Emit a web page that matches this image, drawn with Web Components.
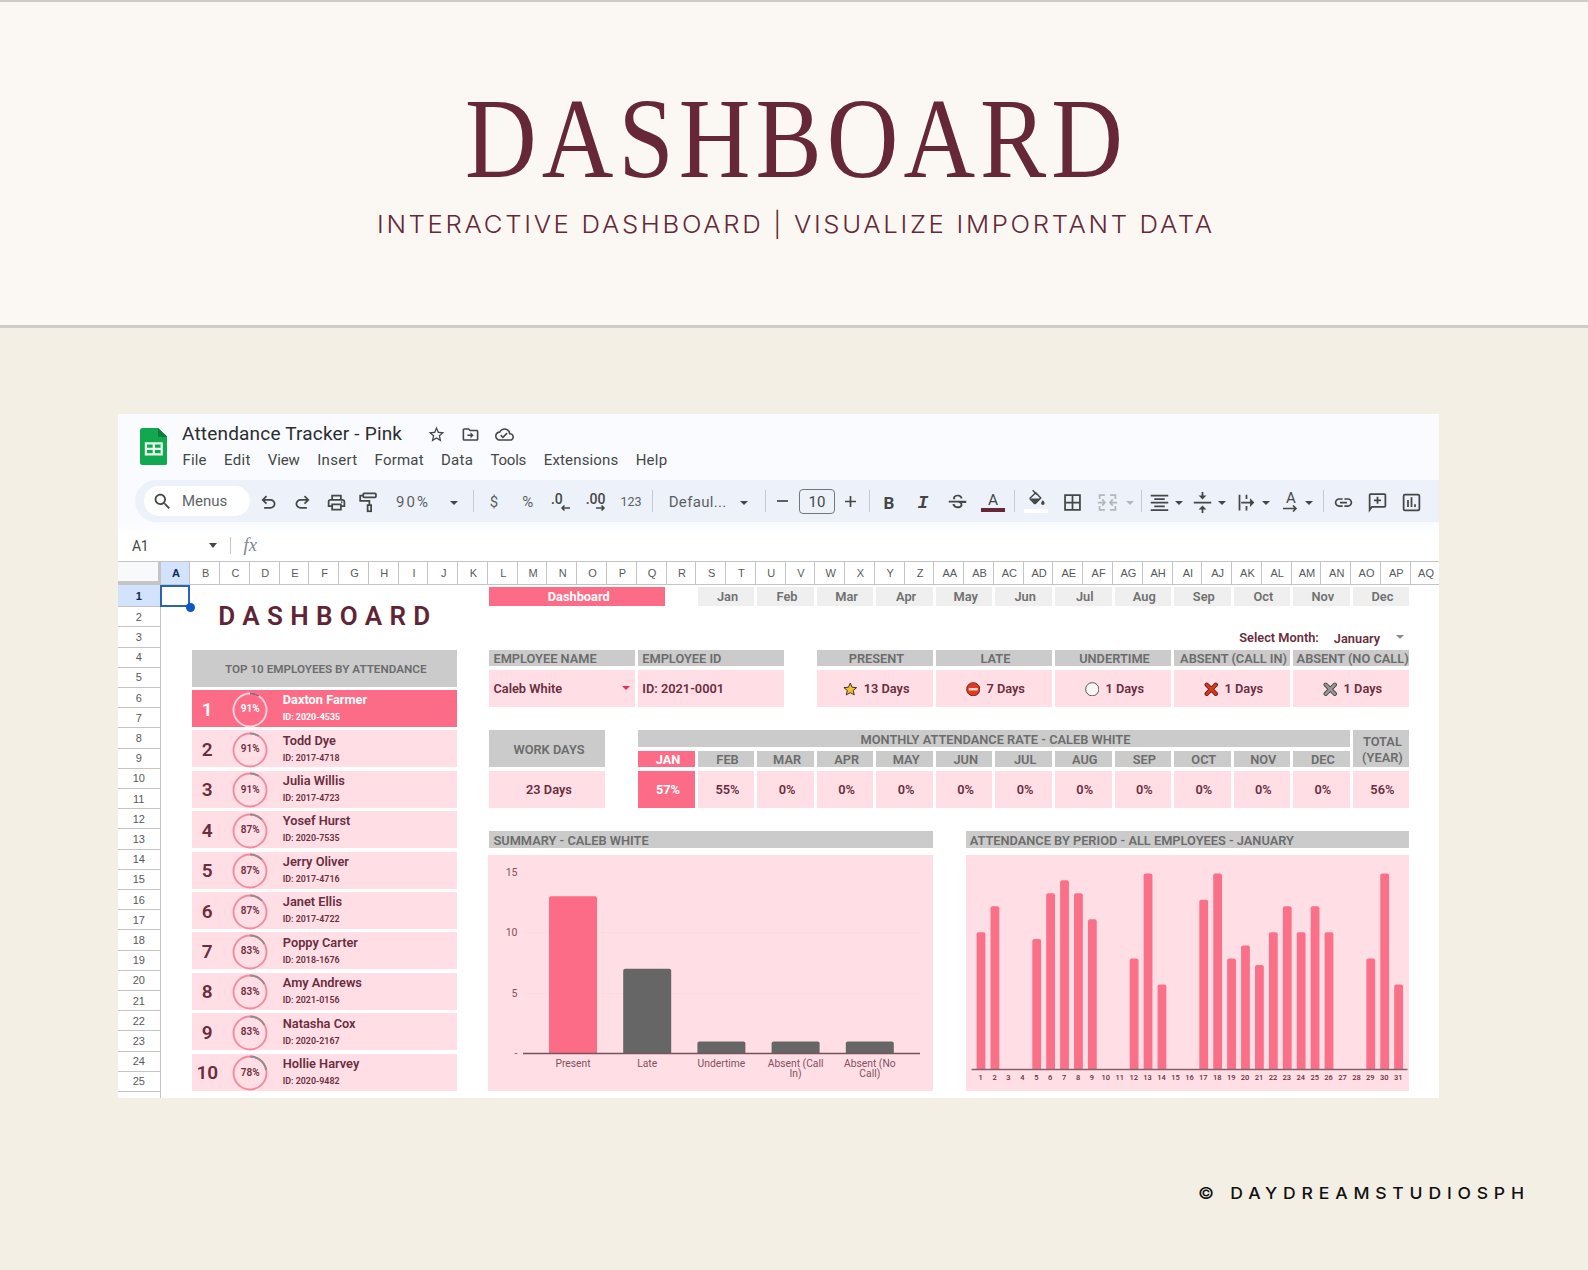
<!DOCTYPE html>
<html lang="en">
<head>
<meta charset="utf-8">
<title>Attendance Tracker - Pink</title>
<style>
html, body {
	margin: 0;
	height: 100%;
	overflow: hidden;
}
</style>
</head>
<body>
<promo-page>
	<promo-header slot="header">
		<fit-text slot="title" width="658" stretch="0.87">DASHBOARD</fit-text>
		<fit-text slot="subtitle" width="835" stretch="1.05">INTERACTIVE DASHBOARD | VISUALIZE IMPORTANT DATA</fit-text>
	</promo-header>
	<app-window>
		<doc-bar></doc-bar>
		<tool-bar></tool-bar>
		<formula-bar cell="A1"></formula-bar>
		<sheet-grid></sheet-grid>
	</app-window>
	<fit-text slot="footer" width="326" stretch="1.07">© DAYDREAMSTUDIOSPH</fit-text>
</promo-page>

<script>
const GREY = '#444746';

// 24 unit icons, filled unless they set their own stroke
const ICONS = {
	star: '<path d="M22 9.24l-7.19-.62L12 2 9.19 8.63 2 9.24l5.46 4.73L5.82 21 12 17.27 18.18 21l-1.63-7.03L22 9.24zM12 15.4l-3.76 2.27 1-4.28-3.32-2.88 4.38-.38L12 6.1l1.71 4.04 4.38.38-3.32 2.88 1 4.28L12 15.4z"/>',
	move: '<path d="M20 6h-8l-2-2H4c-1.1 0-2 .9-2 2v12c0 1.1.9 2 2 2h16c1.1 0 2-.9 2-2V8c0-1.1-.9-2-2-2zm0 12H4V6h5.17l2 2H20v10zM8 12h4V9l4 4-4 4v-3H8z"/>',
	cloud: '<path d="M19.35 10.04C18.67 6.59 15.64 4 12 4 9.11 4 6.6 5.64 5.35 8.04 2.34 8.36 0 10.91 0 14c0 3.31 2.69 6 6 6h13c2.76 0 5-2.24 5-5 0-2.64-2.05-4.78-4.65-4.96zM19 18H6c-2.21 0-4-1.79-4-4 0-2.05 1.53-3.76 3.56-3.97l1.07-.11.5-.95C8.08 7.14 9.94 6 12 6c2.62 0 4.88 1.86 5.39 4.43l.3 1.5 1.53.11c1.56.1 2.78 1.41 2.78 2.96 0 1.65-1.35 3-3 3zm-9-3.82l-2.09-2.09L6.5 13.5 10 17l6.01-6.01-1.41-1.41z"/>',
	search: '<path d="M15.5 14h-.79l-.28-.27C15.41 12.59 16 11.11 16 9.5 16 5.91 13.09 3 9.5 3S3 5.91 3 9.5 5.91 16 9.5 16c1.61 0 3.09-.59 4.23-1.57l.27.28v.79l5 4.99L20.49 19l-4.99-5zm-6 0C7.01 14 5 11.99 5 9.5S7.01 5 9.5 5 14 7.01 14 9.5 11.99 14 9.5 14z"/>',
	undo: '<path d="M7 19v-2h7.1q1.58 0 2.74-1T18 13.5q0-1.5-1.16-2.5T14.1 10H7.8l2.6 2.6L9 14 4 9l5-5 1.4 1.4L7.8 8h6.3q2.43 0 4.16 1.58T20 13.5q0 2.35-1.74 3.93T14.1 19z"/>',
	redo: '<path transform="matrix(-1 0 0 1 24 0)" d="M7 19v-2h7.1q1.58 0 2.74-1T18 13.5q0-1.5-1.16-2.5T14.1 10H7.8l2.6 2.6L9 14 4 9l5-5 1.4 1.4L7.8 8h6.3q2.43 0 4.16 1.58T20 13.5q0 2.35-1.74 3.93T14.1 19z"/>',
	print: '<path d="M19 8h-1V3H6v5H5c-1.66 0-3 1.34-3 3v6h4v4h12v-4h4v-6c0-1.66-1.34-3-3-3zM8 5h8v3H8V5zm8 12v2H8v-4h8v2zm2-2v-2H6v2H4v-4c0-.55.45-1 1-1h14c.55 0 1 .45 1 1v4h-2z"/><circle cx="18" cy="11.5" r="1"/>',
	paint: '<g fill="none" stroke="currentColor" stroke-width="2"><rect x="6" y="1.5" width="14.5" height="4.5" rx="1"/><path d="M6 4H2.5v6H13v5"/><rect x="11" y="15" width="4" height="7"/></g>',
	strike: '<path d="M6.85 7.08C6.85 4.37 9.45 3 12.24 3c1.64 0 3 .49 3.9 1.28.77.65 1.46 1.73 1.46 3.24h-2.1c0-.31-.05-.59-.15-.85-.29-.86-1.9-1.78-3.15-1.78-2.1 0-3.2 1.2-3.2 2.2 0 .48.25.88.74 1.21H7.39c-.21-.34-.54-.59-.54-1.22zM22 12v-2H2v2h10.62c1.15.45 2.96.75 2.96 2.2 0 1.3-1.5 2.2-3.28 2.2-1.54 0-3.63-.84-3.63-2.8H6.4c0 .55.08 1.13.24 1.58.81 2.29 3.29 3.3 5.67 3.3 2.27 0 5.3-.89 5.3-4.05 0-.3-.01-1.16-.48-1.94H22z"/>',
	fill: '<path d="M3 10L11 2.5l7 7.5-7.5 7.5q-.7.6-1.4 0L3.2 11.5z" fill="none" stroke="currentColor" stroke-width="2"/><path d="M3 10.5h15l-8 7.5z"/><path d="M6.5-1l6 6" stroke="currentColor" stroke-width="2"/><path d="M21 13s2.5 2.7 2.5 4.2a2.5 2.5 0 0 1-5 0C18.5 15.7 21 13 21 13z"/>',
	borders: '<path d="M3.5 3.5h17v17h-17zM12 3.5v17M3.5 12h17" fill="none" stroke="currentColor" stroke-width="2"/>',
	merge: '<path d="M9 3.5H3V8m0 8v4.5h6M15 3.5h6V8m0 8v4.5h-6M1 12h7m15 0h-7M6 8.5L9 12l-3 3.5m12-7L15 12l3 3.5" fill="none" stroke="currentColor" stroke-width="2"/>',
	align: '<path d="M2 3h20v2H2zm4 4.2h12v2H6zm-4 4h20v2H2zm4 4.2h12v2H6zm-4 4.3h20v2H2z"/>',
	valign: '<path d="M2 11h20v2H2zM11 0h2v4h3.5L12 8.5 7.5 4H11zM11 24h2v-4h3.500L12 15.500 7.500 20H11z"/>',
	wrap: '<path d="M3 3h2v18H3zm8 0h2v5h-2zm0 13h2v5h-2zM6 11h10V7l5 5-5 5v-4H6z"/>',
	link: '<path d="M3.9 12c0-1.71 1.39-3.1 3.1-3.1h4V7H7c-2.76 0-5 2.24-5 5s2.24 5 5 5h4v-1.9H7c-1.71 0-3.1-1.39-3.1-3.1zM8 13h8v-2H8v2zm9-6h-4v1.9h4c1.71 0 3.1 1.39 3.1 3.1s-1.39 3.1-3.1 3.1h-4V17h4c2.76 0 5-2.24 5-5s-2.24-5-5-5z"/>',
	comment: '<path d="M3 20.5v-17q0-1 1-1h16q1 0 1 1V16q0 1-1 1H5.500zM12 5.500v8M8 9.500h8" fill="none" stroke="currentColor" stroke-width="2"/>',
	chart: '<rect x="3" y="3" width="18" height="18" rx="1.5" fill="none" stroke="currentColor" stroke-width="2"/><path d="M7 9h2v8H7zm4-3h2v11h-2zm4 8h2v3h-2z"/>'
};

// cell marks, 16 unit box
const MARKS = {
	star: '<path d="M8 1.2l2 4.600 5 .4-3.800 3.200 1.200 4.900L8 11.700l-4.400 2.600 1.200-4.900L1 6.200l5-.4z" fill="#f5c12e" stroke="#3e3428" stroke-width="1.100"/>',
	stop: '<circle cx="8" cy="8" r="7.3" fill="#df3a20" stroke="#6b2018" stroke-width="1"/><rect x="3" y="6.7" width="10" height="2.6" fill="#f9d9cf"/>',
	circle: '<circle cx="8" cy="8" r="7.3" fill="#f6f6f6" stroke="#4a4a4a" stroke-width="1"/>',
	cross: '<path d="M3 3l10 10M13 3L3 13" stroke="#5b1a14" stroke-width="4.8" stroke-linecap="round"/><path d="M3 3l10 10M13 3L3 13" stroke="#d9381e" stroke-width="3" stroke-linecap="round"/>',
	ghost: '<path d="M3 3l10 10M13 3L3 13" stroke="#454545" stroke-width="4.8" stroke-linecap="round"/><path d="M3 3l10 10M13 3L3 13" stroke="#999" stroke-width="2.8" stroke-linecap="round"/>'
};

class Base extends HTMLElement {
	constructor() {
		super();
		this.attachShadow({mode: 'open'});
	}

	connectedCallback() {
		this.shadowRoot.innerHTML = this.render();
	}
}

class PromoPage extends Base {
	render() {
		return `
		<style>
		:host {
			display: flex;
			flex-direction: column;
			box-sizing: border-box;
			width: 1588px;
			height: 1270px;
			background: #f4efe4;
		}

		main {
			margin: 86px 0 0 118px;
		}

		footer {
			margin: 83px 64px 0 0;
			text-align: right;
			font: 500 16.4px/24px Inter, sans-serif;
			color: #111;
		}
		</style>
		<slot name="header"></slot>
		<main><slot></slot></main>
		<footer><slot name="footer"></slot></footer>`;
	}
}

class PromoHeader extends Base {
	render() {
		return `
		<style>
		:host {
			display: flex;
			flex-direction: column;
			align-items: center;
			box-sizing: border-box;
			height: 328px;
			background: #fbf8f4;
			border-top: 2px solid #cfccc7;
			border-bottom: 3px solid #cfccc7;
			color: #662838;
		}

		h1 {
			margin: 74px 0 0;
			font: 400 114px/126px "Liberation Serif", serif;
		}

		p {
			margin: 8px 0 0;
			font: 300 24.5px/28px Inter, sans-serif;
		}
		</style>
		<h1><slot name="title"></slot></h1>
		<p><slot name="subtitle"></slot></p>`;
	}
}

// tracks its text out (or in) to an exact width; stretch makes the letters wider or narrower
class FitText extends Base {
	render() {
		return `
		<style>
		:host {
			display: inline-block;
			white-space: nowrap;
		}

		span {
			display: inline-block;
			transform-origin: 0 0;
		}
		</style>
		<span><slot></slot></span>`;
	}

	connectedCallback() {
		super.connectedCallback();
		const span = this.shadowRoot.querySelector('span');
		const width = this.getAttribute('width');
		const stretch = this.getAttribute('stretch') || 1;
		const count = this.textContent.trim().length - 1;
		const gap = (width / stretch - span.getBoundingClientRect().width) / count;
		span.style.letterSpacing = gap + 'px';
		span.style.marginRight = -gap + 'px';
		if (stretch != 1) {
			span.style.transform = `scaleX(${stretch})`;
			this.style.width = width + 'px';
			this.style.textAlign = 'left';
		}
	}
}

class AppWindow extends Base {
	render() {
		return `
		<style>
		:host {
			display: flex;
			flex-direction: column;
			width: 1321px;
			height: 684px;
			overflow: hidden;
			background: linear-gradient(#f9fbfe 108px, #fff 122px);
			font-family: Roboto, sans-serif;
			color: ${GREY};
		}

		::slotted(*) {
			flex: none;
		}
		</style>
		<slot></slot>`;
	}
}

class UiIcon extends Base {
	render() {
		return `
		<style>
		:host {
			display: inline-flex;
			align-items: center;
			justify-content: center;
			width: 20px;
			height: 22px;
		}

		svg {
			flex: none;
			width: var(--size, 21px);
			height: var(--size, 21px);
			fill: currentColor;
			overflow: visible;
		}
		</style>
		<svg viewBox="0 0 24 24">${ICONS[this.getAttribute('name')]}</svg>`;
	}
}

class DocBar extends Base {
	render() {
		const menus = ['File', 'Edit', 'View', 'Insert', 'Format', 'Data', 'Tools', 'Extensions', 'Help'];
		const widths = [24, 26.5, 32, 40, 49, 32, 36, 74.5, 31.5];
		return `
		<style>
		:host {
			display: flex;
			height: 66px;
			box-sizing: border-box;
			padding: 8px 0 0 21.5px;
			gap: 15px;
		}

		.logo {
			width: 27.5px;
			height: 37px;
			margin-top: 5.5px;
		}

		.name {
			display: flex;
			align-items: center;
			height: 24px;
			font-size: 19px;
			line-height: 24px;
			color: #2b2d30;
			--size: 19px;
		}

		.name ui-icon {
			margin: 1px 0 0 14.3px;
			color: ${GREY};
		}

		.name ui-icon:first-of-type {
			margin-left: 24px;
		}

		nav {
			display: flex;
			gap: 17.4px;
			margin-top: 4px;
			margin-left: .5px;
			font-size: 15px;
			line-height: 20px;
		}
		</style>
		<svg class="logo" viewBox="0 0 27.5 37">
			<path d="M2.5 0H18l9.500 9v25.500q0 2.500-2.500 2.500H2.500Q0 37 0 34.500v-32Q0 0 2.500 0z" fill="#12a84f"/>
			<path d="M18 0l9.500 9H18z" fill="#0b7d38"/>
			<path d="M4.800 14.300h18v13.200h-18zM7 16.500v3.200h5.700v-3.200zm7.900 0v3.200h5.700v-3.200zM7 21.900v3.400h5.700v-3.400zm7.900 0v3.400h5.700v-3.400z" fill="#eafaf0" fill-rule="evenodd"/>
		</svg>
		<div>
			<div class="name">
				<fit-text width="220">Attendance Tracker - Pink</fit-text>
				<ui-icon name="star"></ui-icon>
				<ui-icon name="move"></ui-icon>
				<ui-icon name="cloud"></ui-icon>
			</div>
			<nav>${menus.map((m, i) => `<fit-text width="${widths[i]}">${m}</fit-text>`).join('')}</nav>
		</div>`;
	}
}

// [gap before, kind, value, width]
const TOOLS = [
	[9, 'icon', 'undo'], [13.5, 'icon', 'redo'], [14.3, 'icon', 'print'], [12.7, 'icon', 'paint'],
	[17, 'text', '<fit-text width="32">90%</fit-text>', 32], [21, 'caret'], [14, 'rule'],
	[10, 'text', '$', 20], [13.7, 'text', '%', 20], [13.3, 'dec', '.0', 20, 'left'], [14.7, 'dec', '.00', 20, 'right'],
	[15.3, 'small', '123', 20], [11.5, 'rule'], [15.5, 'text', '<fit-text width="57.5">Defaul...</fit-text>', 57], [13.5, 'caret'], [16, 'rule'],
	[6.5, 'sign', '<path d="M1 6h11"/>'], [6, 'box', '10'], [6, 'sign', '<path d="M1 6.5h11M6.5 1v11"/>'], [8, 'rule'],
	[9, 'bold', 'B', 20], [14, 'italic', 'I', 20], [14.5, 'icon', 'strike'], [13.5, 'color', 'A', 24], [9.5, 'rule'],
	[9, 'fill', 'fill'], [14, 'icon', 'borders'], [15, 'icon off', 'merge'], [7.5, 'caret off'], [6, 'rule'],
	[7.5, 'icon', 'align'], [4.2, 'caret'], [9.3, 'icon', 'valign'], [4.5, 'caret'], [9, 'icon', 'wrap'], [4.5, 'caret'],
	[10, 'rotate', 'A', 20], [3.5, 'caret'], [8.5, 'rule'],
	[9.5, 'icon', 'link'], [14, 'icon', 'comment'], [14.5, 'icon', 'chart']
];

class ToolBar extends Base {
	tool([gap, kind, value = '', width, dir]) {
		const box = `class="tool ${kind}" style="margin-left:${gap}px;${width ? `width:${width}px` : ''}"`;
		const type = kind.split(' ')[0];
		if (type == 'icon' || type == 'fill') {
			return `<span ${box}><ui-icon name="${value}"></ui-icon></span>`;
		}
		if (type == 'sign') {
			return `<span ${box}><svg width="13" height="13" fill="none" stroke="currentColor" stroke-width="1.7">${value}</svg></span>`;
		}
		if (type == 'dec') {
			const head = dir == 'left' ? 'M10 3H2M4.5.5L2 3l2.5 2.5' : 'M1 3h8M6.5.5L9 3 6.5 5.5';
			return `<span ${box}><b>${value}</b><svg width="11" height="6" fill="none" stroke="currentColor" stroke-width="1.5"><path d="${head}"/></svg></span>`;
		}
		if (type == 'rotate') {
			return `<span ${box}>${value}<svg width="15" height="7" fill="none" stroke="currentColor" stroke-width="1.6"><path d="M0 3.5h13M10 .5l3 3-3 3"/></svg></span>`;
		}
		return `<span ${box}>${value}</span>`;
	}

	render() {
		return `
		<style>
		:host {
			display: flex;
			align-items: center;
			box-sizing: border-box;
			height: 42px;
			margin-left: 16.5px;
			padding-left: 9px;
			border-radius: 21px 0 0 21px;
			background: #edf2fa;
			font-size: 15px;
			white-space: nowrap;
		}

		.menus {
			display: flex;
			align-items: center;
			box-sizing: border-box;
			flex: none;
			width: 106px;
			height: 30px;
			padding-left: 9px;
			gap: 9.5px;
			border-radius: 15px;
			background: #fff;
			color: #5f6368;
		}

		.menus span {
			margin-bottom: 1px;
		}

		.menus ui-icon {
			color: ${GREY};
		}

		.tool {
			display: flex;
			flex: none;
			align-items: center;
			justify-content: center;
			height: 22px;
			margin-top: 3px;
		}

		.text, .small {
			color: #5c5f62;
			margin-top: 1px;
		}

		.small {
			font-size: 12.5px;
			margin-top: 0;
		}

		.caret {
			width: 10px;
		}

		.caret::before {
			content: "";
			border: 4.3px solid transparent;
			border-top: 4.6px solid currentColor;
			border-bottom: 0;
		}

		.off {
			color: #b3b6bb;
		}

		.rule {
			width: 1px;
			background: #c7cad1;
			margin-top: 0;
		}

		.sign {
			width: 20px;
			margin-top: 0;
		}

		.box {
			box-sizing: border-box;
			width: 36px;
			height: 25.5px;
			margin-top: 1px;
			border: 1px solid #747775;
			border-radius: 4px;
		}

		.bold {
			font-size: 17px;
			font-weight: 700;
		}

		.italic {
			font: italic 700 18px "Liberation Mono", monospace;
		}

		.dec {
			flex-direction: column;
			align-items: flex-end;
			font-size: 14px;
			line-height: 12px;
			margin-top: 1px;
		}

		.dec b {
			font-weight: 500;
			align-self: flex-start;
		}

		.color {
			box-sizing: border-box;
			height: 20px;
			margin-top: 2px;
			border-bottom: 4px solid #662838;
			font-size: 15.5px;
		}

		.fill {
			width: 24px;
			height: 20px;
			margin-top: 0;
			border-bottom: 4px solid #fff;
			--size: 17px;
		}

		.rotate {
			flex-direction: column;
			font-size: 15px;
			line-height: 13px;
			margin-top: 1px;
		}
		</style>
		<div class="menus"><ui-icon name="search"></ui-icon><span>Menus</span></div>
		${TOOLS.map(this.tool).join('')}`;
	}
}

class FormulaBar extends Base {
	render() {
		return `
		<style>
		:host {
			display: flex;
			align-items: center;
			box-sizing: border-box;
			height: 39px;
			padding: 8px 0 0 14px;
			font-size: 14px;
			line-height: 14px;
		}

		.ref {
			width: 76.5px;
			letter-spacing: -.5px;
		}

		i {
			border: 4.3px solid transparent;
			border-top: 5px solid currentColor;
			border-bottom: 0;
		}

		hr {
			width: 1px;
			height: 17px;
			margin: 0 13px 0 13px;
			border: 0;
			background: #c7c7c7;
		}

		.fx {
			font: italic 18.5px/17px "Liberation Serif", serif;
			color: #80868b;
		}
		</style>
		<span class="ref">${this.getAttribute('cell')}</span><i></i><hr><span class="fx">fx</span>`;
	}
}

function colName(n) {
	return n < 26 ? String.fromCharCode(65 + n) : 'A' + String.fromCharCode(39 + n);
}

function colIndex(name) {
	return [...name].reduce((sum, c) => sum * 26 + c.charCodeAt(0) - 64, 0);
}

// at="L4:P4" puts the cell on the parent grid; line 1 belongs to the headings
class SheetCell extends Base {
	connectedCallback() {
		super.connectedCallback();
		const [from, to = from] = this.getAttribute('at').split(':');
		const [, c1, r1] = from.match(/([A-Z]+)(\d+)/);
		const [, c2, r2] = to.match(/([A-Z]+)(\d+)/);
		this.style.gridArea = `${+r1 + 1} / ${colIndex(c1) + 1} / ${+r2 + 2} / ${colIndex(c2) + 2}`;
	}

	render() {
		const mark = this.getAttribute('mark');
		return `
		<style>
		:host {
			display: flex;
			align-items: center;
			justify-content: center;
			box-sizing: border-box;
			min-width: 0;
			margin: 2px 1.5px 1.5px 1.5px;
			padding: 1.5px 0 0 3px;
			font-size: 12.8px;
			line-height: 16px;
			font-weight: 600;
			text-align: center;
			white-space: nowrap;
			color: #6b2d3e;
		}

		:host([tone="head"]) {
			background: #cbcbcb;
			color: #6c6c6c;
		}

		:host([tone="data"]) {
			background: #ffdfe5;
		}

		:host([tone="on"]) {
			background: #fd6c86;
			color: #fff;
			font-weight: 700;
		}

		:host([tone="tab"]) {
			background: #efefef;
			color: #707070;
		}

		:host([align="left"]) {
			justify-content: flex-start;
			padding-left: 4px;
		}

		:host([align="right"]) {
			justify-content: flex-end;
		}

		:host([caret])::after {
			content: "";
			margin: 0 5px 2px auto;
			border: 4px solid transparent;
			border-top: 4.3px solid var(--caret, #e0315a);
			border-bottom: 0;
		}

		svg {
			width: 14.5px;
			height: 14.5px;
			margin-right: 6px;
		}
		</style>
		${mark ? `<svg viewBox="0 0 16 16">${MARKS[mark]}</svg>` : ''}
		<slot></slot>`;
	}
}

class EmployeeRow extends Base {
	render() {
		const [rank, name, id, rate] = ['rank', 'name', 'number', 'rate'].map(a => this.getAttribute(a));
		return `
		<style>
		:host {
			display: grid;
			grid-template-columns: 30px 58px 1fr;
			align-items: center;
			width: 100%;
			height: 100%;
			text-align: left;
			--ring: #f38ba0;
			--rest: #98898d;
		}

		:host([rank="1"]) {
			--ring: #ffd3db;
			--rest: #a0606c;
		}

		.rank {
			text-align: center;
			font-size: 19px;
			font-weight: 600;
			margin-left: -5px;
		}

		.ring {
			display: grid;
			place-items: center;
			width: 36px;
			height: 36px;
			margin-left: 7.5px;
		}

		.ring > * {
			grid-area: 1 / 1;
		}

		.ring svg {
			width: 36px;
			height: 36px;
			fill: none;
			stroke-width: 1.9;
		}

		.ring span {
			font-size: 10px;
			margin-top: -1px;
		}

		.who {
			line-height: 14px;
			margin-top: -2.5px;
		}

		small {
			display: block;
			font-size: 8.9px;
			line-height: 12px;
			margin-top: 4px;
		}
		</style>
		<span class="rank">${rank}</span>
		<div class="ring">
			<svg viewBox="0 0 36 36">
				<circle cx="18" cy="18" r="16.5" stroke="var(--ring)"/>
				<circle cx="18" cy="18" r="16.5" stroke="var(--rest)" pathLength="100" stroke-dasharray="${100 - rate} 100" transform="rotate(-90 18 18)"/>
			</svg>
			<span>${rate}%</span>
		</div>
		<div class="who">${name}<small>ID: ${id}</small></div>`;
	}
}

class SummaryChart extends Base {
	render() {
		const bars = [['Present', 13], ['Late', 7], ['Undertime', 1], ['Absent (Call', 1, 'In)'], ['Absent (No', 1, 'Call)']];
		const base = 198.5;
		const step = 12.1;
		return `
		<style>
		:host {
			display: block;
			width: 444px;
			height: 236px;
		}

		svg {
			display: block;
			font: 400 10.5px Roboto, sans-serif;
			fill: #84505f;
		}
		</style>
		<svg width="444" height="236">
			${[15, 10, 5, 0].map(v => `<text x="29.5" y="${base - v * step + 3.5}" text-anchor="end">${v || '-'}</text>`).join('')}
			<path d="M35 138.5h397M35 77.5h397" stroke="#fcdce2"/>
			${bars.map(([label, v, more], i) => {
				const x = 85 + i * 74.2;
				return `<path d="M${x - 24} ${base}v${2 - v * step}q0-2 2-2h44q2 0 2 2V${base}z" fill="${i ? '#666' : '#fd6c86'}"/>
				<text x="${x}" y="211.5" text-anchor="middle" font-size="10.3">${label}</text>
				${more ? `<text x="${x}" y="222" text-anchor="middle" font-size="10.3">${more}</text>` : ''}`;
			}).join('')}
			<path d="M35 ${base}h397" stroke="#76535c" stroke-width="1.6"/>
		</svg>`;
	}
}

class PeriodChart extends Base {
	render() {
		const days = [21, 25, 0, 0, 20, 27, 29, 27, 23, 0, 0, 17, 30, 13, 0, 0, 26, 30, 17, 19, 16, 21, 25, 21, 25, 21, 0, 0, 17, 30, 13];
		const base = 214.5;
		return `
		<style>
		:host {
			display: block;
			width: 444px;
			height: 236px;
		}

		svg {
			display: block;
			font: 500 7.5px Roboto, sans-serif;
			fill: #6b2d3e;
		}
		</style>
		<svg width="444" height="236">
			${days.map((v, i) => {
				const x = 15 + i * 13.92;
				const bar = v ? `<path d="M${x - 4.4} ${base}v${2 - v * 6.53}q0-2 2-2h4.8q2 0 2 2V${base}z" fill="#fa7088"/>` : '';
				return `${bar}<text x="${x - .4}" y="225" text-anchor="middle">${i + 1}</text>`;
			}).join('')}
			<path d="M5.5 ${base}h436" stroke="#84606a" stroke-width="1.6"/>
		</svg>`;
	}
}

const EMPLOYEES = [
	['Daxton Farmer', '2020-4535', 91],
	['Todd Dye', '2017-4718', 91],
	['Julia Willis', '2017-4723', 91],
	['Yosef Hurst', '2020-7535', 87],
	['Jerry Oliver', '2017-4716', 87],
	['Janet Ellis', '2017-4722', 87],
	['Poppy Carter', '2018-1676', 83],
	['Amy Andrews', '2021-0156', 83],
	['Natasha Cox', '2020-2167', 83],
	['Hollie Harvey', '2020-9482', 78]
];

const MONTHS = ['Jan', 'Feb', 'Mar', 'Apr', 'May', 'Jun', 'Jul', 'Aug', 'Sep', 'Oct', 'Nov', 'Dec'];

const STATS = [
	['PRESENT', 'star', 13],
	['LATE', 'stop', 7],
	['UNDERTIME', 'circle', 1],
	['ABSENT (CALL IN)', 'cross', 1],
	['ABSENT (NO CALL)', 'ghost', 1]
];

class SheetGrid extends Base {
	cell(at, tone, text, more = '') {
		return `<sheet-cell at="${at}" tone="${tone}" ${more}>${text}</sheet-cell>`;
	}

	span(start, size, r1, r2 = r1) {
		return `${colName(start)}${r1}:${colName(start + size - 1)}${r2}`;
	}

	render() {
		const cols = Array.from({length: 43}, (_, i) => `<div class="col${i ? '' : ' on'}" style="grid-area:1/${i + 2}">${colName(i)}</div>`);
		const rows = Array.from({length: 26}, (_, i) => `<div class="row${i ? '' : ' on'}" style="grid-area:${i + 2}/1">${i + 1}</div>`);
		const staff = EMPLOYEES.map(([name, id, rate], i) => this.cell(this.span(1, 9, 6 + i * 2, 7 + i * 2), i ? 'data' : 'on',
			`<employee-row rank="${i + 1}" name="${name}" number="${id}" rate="${rate}"></employee-row>`));
		const tabs = MONTHS.map((m, i) => this.cell(this.span(18 + i * 2, 2, 1), 'tab', m));
		const stats = STATS.map(([label, mark, n], i) => this.cell(this.span(22 + i * 4, 4, 4), 'head', `<span style="margin:0 -2px">${label}</span>`)
			+ this.cell(this.span(22 + i * 4, 4, 5, 6), 'data', `${n} Days`, `mark="${mark}"`));
		const months = MONTHS.map((m, i) => this.cell(this.span(16 + i * 2, 2, 9), i ? 'head' : 'on', m.toUpperCase())
			+ this.cell(this.span(16 + i * 2, 2, 10, 11), i ? 'data' : 'on', ['57%', '55%'][i] || '0%'));
		return `
		<style>
		:host {
			display: grid;
			grid-template-columns: 42.5px repeat(43, 29.78px);
			grid-template-rows: 24px 22.2px repeat(25, 20.21px);
		}

		.col, .row, .corner {
			display: flex;
			align-items: center;
			justify-content: center;
			box-sizing: border-box;
			font: 11px "Liberation Sans", sans-serif;
			color: #575a5a;
			border: 0 solid #c4c4c4;
		}

		.col {
			border-width: 1px 1px 1px 0;
			padding-left: 2px;
		}

		.row {
			border-width: 0 1px 1px 0;
		}

		.on {
			background: #d3e3fd;
			color: #0b2a52;
			font-weight: bold;
		}

		.corner {
			border-width: 1px 3.5px 4px 0;
			background: #f8f9fa;
		}

		.cursor {
			position: relative;
			grid-area: 2 / 2;
			margin: 0 0 0 -.5px;
			border: 2px solid #2a62b5;
		}

		.cursor::after {
			content: "";
			position: absolute;
			right: -7px;
			bottom: -7px;
			width: 9px;
			height: 9px;
			border-radius: 50%;
			background: #0f56c8;
		}

		.title {
			grid-area: 3 / 3 / 4 / 12;
			align-self: center;
			justify-self: start;
			font-size: 26px;
			line-height: 20px;
			font-weight: 600;
			color: #5f2536;
			margin: 0 0 2px 28px;
		}

		.top {
			font-size: 11.7px;
		}

		.plot {
			margin: 5px 1.5px 1.5px .5px;
			padding: 0;
			overflow: hidden;
			align-items: flex-start;
			justify-content: flex-start;
		}

		.plot.wide {
			margin-left: 1.5px;
		}

		.pick {
			--caret: #8a8a8a;
			padding-left: 11px;
			justify-content: flex-start;
		}

		.prompt {
			padding: 1px 1px 0 0;
		}
		</style>
		<div class="corner"></div>
		${cols.join('')}
		${rows.join('')}
		<div class="cursor"></div>
		<fit-text class="title" width="212">DASHBOARD</fit-text>
		${this.cell('B4:J5', 'head', 'TOP 10 EMPLOYEES BY ATTENDANCE', 'class="top"')}
		${staff.join('')}
		${this.cell('L1:Q1', 'on', 'Dashboard')}
		${tabs.join('')}
		${this.cell('AJ3:AM3', '', 'Select Month:', 'align="right" class="prompt"')}
		${this.cell('AN3:AP3', '', 'January', 'class="pick" caret')}
		${this.cell('L4:P4', 'head', 'EMPLOYEE NAME', 'align="left"')}
		${this.cell('Q4:U4', 'head', 'EMPLOYEE ID', 'align="left"')}
		${this.cell('L5:P6', 'data', 'Caleb White', 'align="left" caret')}
		${this.cell('Q5:U6', 'data', 'ID: 2021-0001', 'align="left"')}
		${stats.join('')}
		${this.cell('L8:O9', 'head', 'WORK DAYS')}
		${this.cell('L10:O11', 'data', '23 Days')}
		${this.cell('Q8:AN8', 'head', 'MONTHLY ATTENDANCE RATE - CALEB WHITE')}
		${this.cell('AO8:AP9', 'head', 'TOTAL<br>(YEAR)')}
		${months.join('')}
		${this.cell('AO10:AP11', 'data', '56%')}
		${this.cell('L13:Z13', 'head', 'SUMMARY - CALEB WHITE', 'align="left"')}
		${this.cell('AB13:AP13', 'head', 'ATTENDANCE BY PERIOD - ALL EMPLOYEES - JANUARY', 'align="left"')}
		${this.cell('L14:Z25', 'data', '<summary-chart></summary-chart>', 'class="plot"')}
		${this.cell('AB14:AP25', 'data', '<period-chart></period-chart>', 'class="plot wide"')}`;
	}
}

window.customElements.define('ui-icon', UiIcon);
window.customElements.define('sheet-cell', SheetCell);
window.customElements.define('employee-row', EmployeeRow);
window.customElements.define('summary-chart', SummaryChart);
window.customElements.define('period-chart', PeriodChart);
window.customElements.define('doc-bar', DocBar);
window.customElements.define('tool-bar', ToolBar);
window.customElements.define('formula-bar', FormulaBar);
window.customElements.define('sheet-grid', SheetGrid);
window.customElements.define('app-window', AppWindow);
window.customElements.define('promo-header', PromoHeader);
window.customElements.define('promo-page', PromoPage);
// last, so that the fonts around it are set when it measures
window.customElements.define('fit-text', FitText);
</script>
</body>
</html>
